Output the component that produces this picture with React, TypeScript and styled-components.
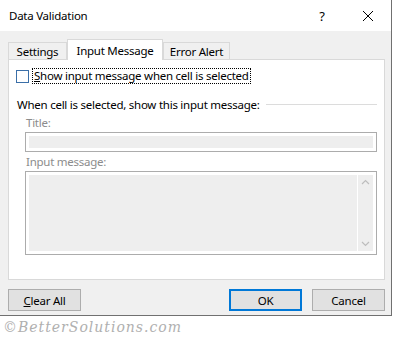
import React from 'react'
import styled, { createGlobalStyle } from 'styled-components'

const GlobalStyle = createGlobalStyle`
    body {
        margin: 0;
        background: #ffffff;
        font-family: "Noto Sans", "Open Sans", sans-serif;
        font-size: 11.5px;
        letter-spacing: -0.25px;
        color: #000000;
    }
`

const Window = styled.div`
    width: 391px;
    height: 315px;
    border-right: 1px solid #707070;
    border-bottom: 1px solid #707070;
    display: flex;
    flex-direction: column;
    background: #f0f0f0;
`

const TitleBar = styled.div`
    height: 31px;
    background: #ffffff;
    display: flex;
    align-items: center;
    padding-left: 9px;
`

const Title = styled.div`
    flex: 1;
`

const TitleButton = styled.div<{ $w: number }>`
    width: ${(p) => p.$w}px;
    height: 31px;
    display: flex;
    align-items: center;
    justify-content: center;
    font-size: 13px;
`

const Body = styled.div`
    flex: 1;
    display: flex;
    flex-direction: column;
    padding: 7px 6px 0 8px;
`

const TabRow = styled.div`
    display: flex;
    align-items: flex-end;
    height: 21px;
`

const Tab = styled.div<{ $active?: boolean; $w: number }>`
    width: ${(p) => p.$w}px;
    height: ${(p) => (p.$active ? 21 : 17)}px;
    box-sizing: border-box;
    border: 1px solid #d9d9d9;
    border-bottom: none;
    background: ${(p) => (p.$active ? '#ffffff' : '#f0f0f0')};
    display: flex;
    align-items: center;
    justify-content: center;
    padding-top: ${(p) => (p.$active ? 0 : 1)}px;
    margin-bottom: ${(p) => (p.$active ? -1 : 0)}px;
    position: relative;
    z-index: ${(p) => (p.$active ? 1 : 0)};
`

const Panel = styled.div`
    height: 221px;
    box-sizing: border-box;
    background: #ffffff;
    border: 1px solid #d9d9d9;
    padding: 9px 7px 0 7px;
    display: flex;
    flex-direction: column;
`

const CheckRow = styled.div`
    display: flex;
    align-items: center;
    gap: 4px;
    height: 14px;
`

const CheckBox = styled.div`
    width: 13px;
    height: 13px;
    box-sizing: border-box;
    border: 1px solid #3b6fa8;
    background: #ffffff;
`

const FocusLabel = styled.div`
    outline: 1px dotted #000000;
    outline-offset: 0;
    padding: 0 1px;
    line-height: 14px;
`

const GroupHeader = styled.div`
    display: flex;
    align-items: center;
    gap: 6px;
    margin-top: 14px;
    margin-left: 1px;
    white-space: nowrap;
`

const GroupLine = styled.div`
    flex: 1;
    height: 1px;
    background: #dcdcdc;
`

const FieldLabel = styled.div<{ $top: number }>`
    color: #8c8c8c;
    margin-left: 10px;
    margin-top: ${(p) => p.$top}px;
    line-height: 16px;
`

const TextBox = styled.div<{ $h: number }>`
    margin-left: 9px;
    margin-top: 1px;
    height: ${(p) => p.$h}px;
    box-sizing: border-box;
    border: 1px solid #acacac;
    padding: 3px;
    background: #ffffff;
    display: flex;
    gap: 1px;
`

const Fill = styled.div`
    flex: 1;
    background: #eeeeee;
`

const ScrollBar = styled.div`
    width: 15px;
    background: #eeeeee;
    display: flex;
    flex-direction: column;
    justify-content: space-between;
    align-items: center;
    padding: 4px 0;
`

const Footer = styled.div`
    display: flex;
    align-items: center;
    margin-top: 9px;
    height: 22px;
`

const Button = styled.div<{ $primary?: boolean }>`
    width: 73px;
    height: 22px;
    box-sizing: border-box;
    border: ${(p) => (p.$primary ? '2px solid #0078d7' : '1px solid #adadad')};
    background: #e1e1e1;
    display: flex;
    align-items: center;
    justify-content: center;
`

const Spacer = styled.div`
    flex: 1;
`

const Gap = styled.div`
    width: 10px;
`

const Watermark = styled.div`
    font-family: "DejaVu Serif", serif;
    font-style: italic;
    color: #b0b0b0;
    font-size: 14px;
    letter-spacing: 1px;
    padding: 3px 0 0 3px;
`

const Chevron = ({ up }: { up?: boolean }) => (
    <svg width="9" height="6" viewBox="0 0 9 6">
        <path
            d={up ? 'M1 5 L4.5 1.5 L8 5' : 'M1 1 L4.5 4.5 L8 1'}
            fill="none"
            stroke="#bdbdbd"
            strokeWidth="1.2"
        />
    </svg>
)

const CloseIcon = () => (
    <svg width="12" height="12" viewBox="0 0 12 12">
        <path d="M1 1 L11 11 M11 1 L1 11" stroke="#000" strokeWidth="1" />
    </svg>
)

export default function App() {
    return (
        <>
            <GlobalStyle />
            <Window>
                <TitleBar>
                    <Title>Data Validation</Title>
                    <TitleButton $w={46}>?</TitleButton>
                    <TitleButton $w={46}>
                        <CloseIcon />
                    </TitleButton>
                </TitleBar>
                <Body>
                    <TabRow>
                        <Tab $w={59}>Settings</Tab>
                        <Tab $w={96} $active>
                            Input Message
                        </Tab>
                        <Tab $w={67}>Error Alert</Tab>
                    </TabRow>
                    <Panel>
                        <CheckRow>
                            <CheckBox />
                            <FocusLabel>
                                <u>S</u>how input message when cell is selected
                            </FocusLabel>
                        </CheckRow>
                        <GroupHeader>
                            When cell is selected, show this input message:
                            <GroupLine />
                        </GroupHeader>
                        <FieldLabel $top={3}>Title:</FieldLabel>
                        <TextBox $h={20}>
                            <Fill />
                        </TextBox>
                        <FieldLabel $top={2}>Input message:</FieldLabel>
                        <TextBox $h={84}>
                            <Fill />
                            <ScrollBar>
                                <Chevron up />
                                <Chevron />
                            </ScrollBar>
                        </TextBox>
                    </Panel>
                    <Footer>
                        <Button>
                            <span>
                                <u>C</u>lear All
                            </span>
                        </Button>
                        <Spacer />
                        <Button $primary>OK</Button>
                        <Gap />
                        <Button>Cancel</Button>
                    </Footer>
                </Body>
            </Window>
            <Watermark>©BetterSolutions.com</Watermark>
        </>
    )
}
